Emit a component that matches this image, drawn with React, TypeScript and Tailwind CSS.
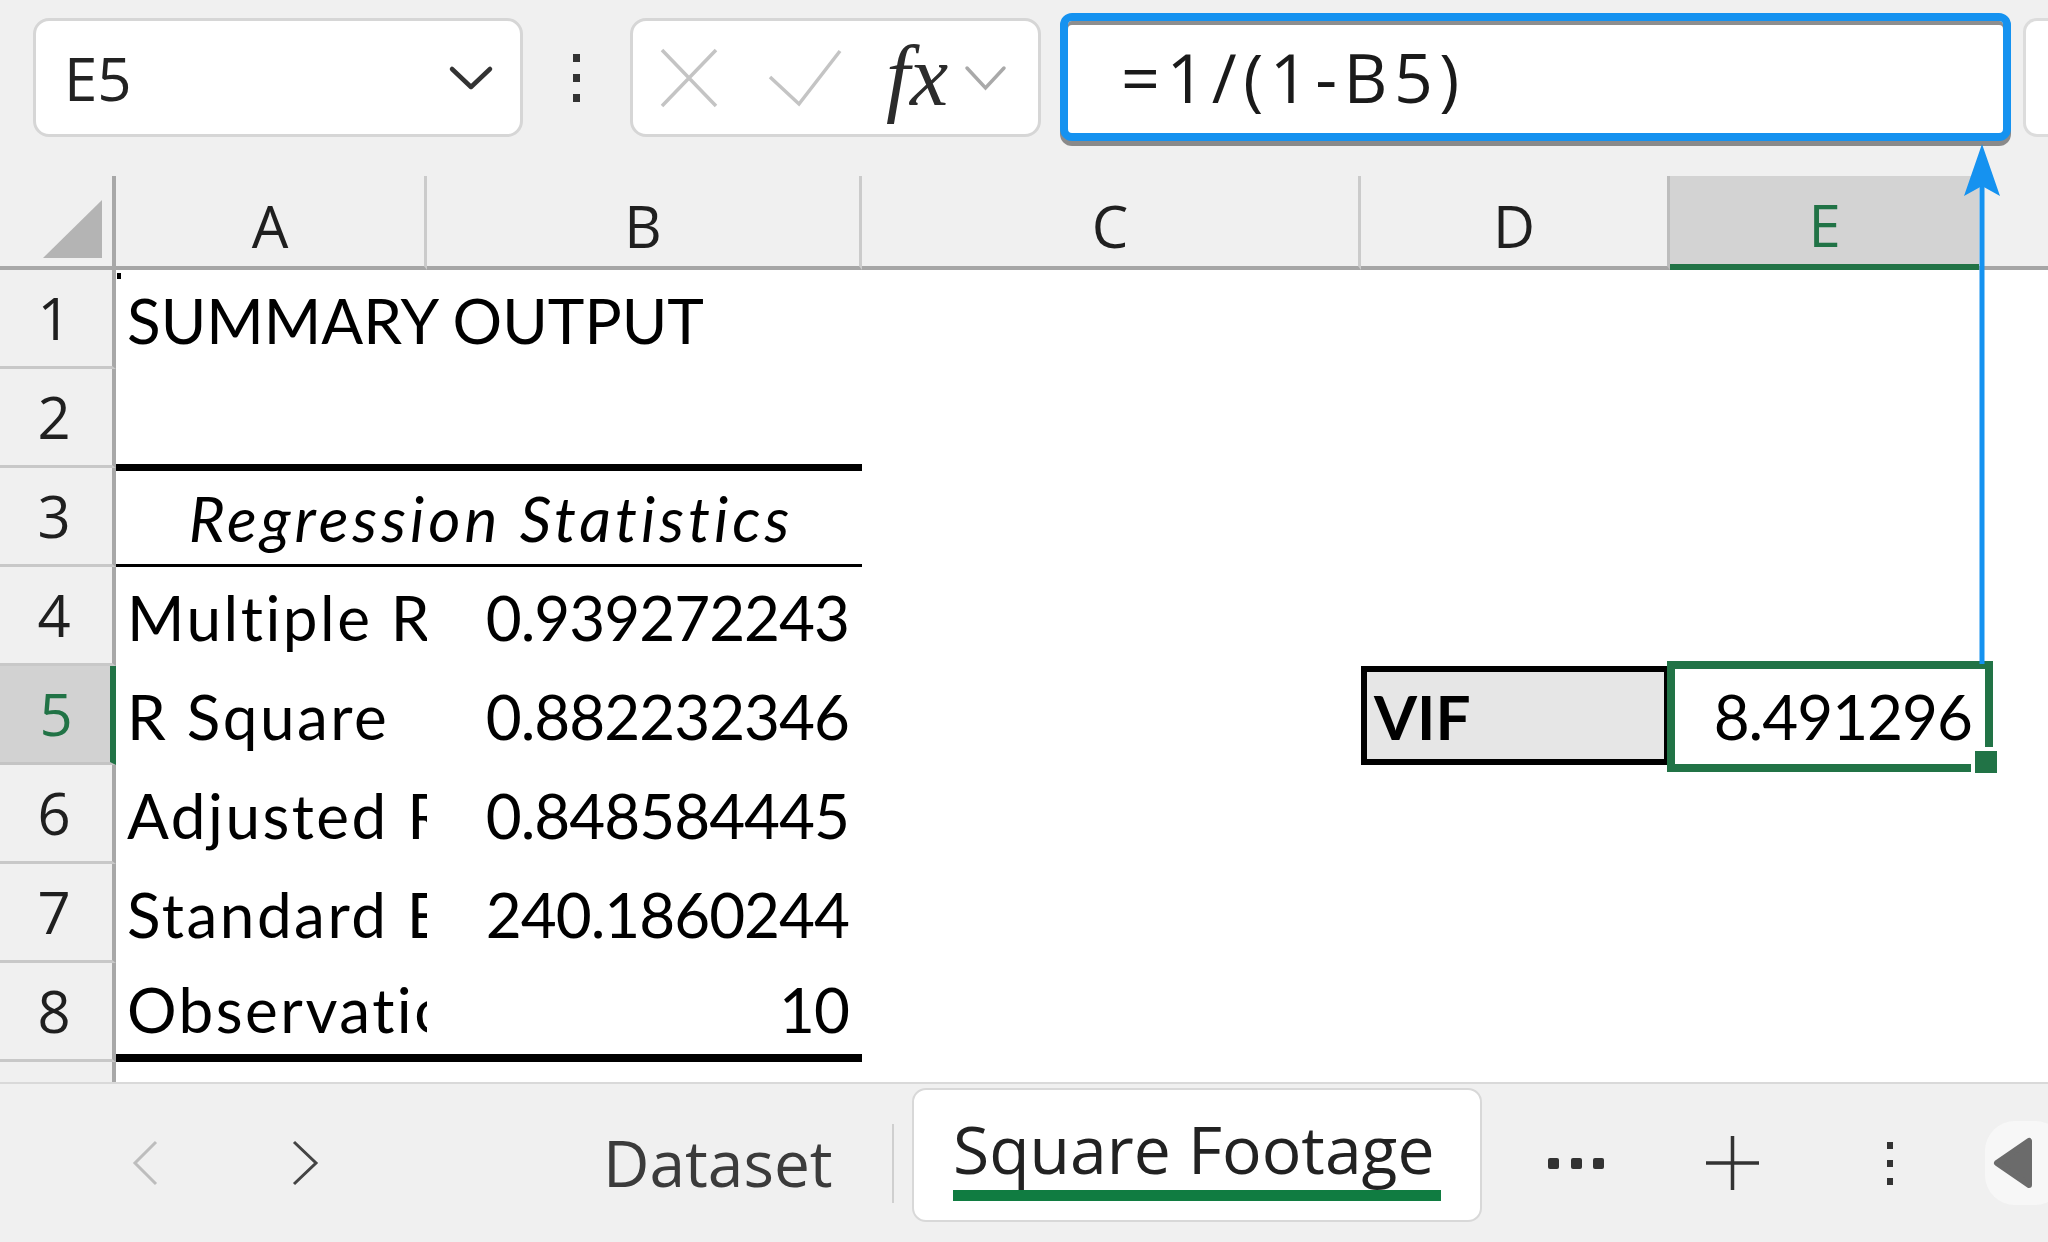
import React from "react";

function RowHead({ n, sel }: { n: string; sel?: boolean }) {
  if (sel) {
    return (
      <div className="flex h-full w-[116px] shrink-0 items-center justify-center border-b-[3px] border-r-[6px] border-b-[#c4c4c4] border-r-[#217346] bg-[#d2d2d2] pl-[2px] text-[58px] leading-none text-[#217346]">
        {n}
      </div>
    );
  }
  return (
    <div className="flex h-full w-[116px] shrink-0 items-center justify-center border-b-[3px] border-r-[4px] border-b-[#c8c8c8] border-r-[#a8a8a8] bg-[#f0f0f0] pr-[4px] text-[58px] leading-none text-[#1f1f1f]">
      {n}
    </div>
  );
}

function LabelCell({ text }: { text: string }) {
  return (
    <div className="flex h-full w-[311px] shrink-0 items-center overflow-hidden whitespace-nowrap pl-[11px] font-[Lato,sans-serif] text-[62px] leading-none tracking-[2.5px] text-black">
      {text}
    </div>
  );
}

function ValueCell({ text, last }: { text: string; last?: boolean }) {
  if (last) {
    return (
      <div className="flex h-full w-[435px] shrink-0 items-center justify-end border-b-[8px] border-black pr-[13px] font-[Lato,sans-serif] text-[62px] leading-none tracking-[-1px] text-black">
        {text}
      </div>
    );
  }
  return (
    <div className="flex h-full w-[435px] shrink-0 items-center justify-end pr-[13px] font-[Lato,sans-serif] text-[62px] leading-none tracking-[-1px] text-black">
      {text}
    </div>
  );
}

export default function App() {
  return (
    <div className="relative h-[1242px] w-[2048px] overflow-hidden bg-[#f0f0f0] font-['Open_Sans',sans-serif] text-[#1f1f1f]">
      {/* Toolbar */}
      <div className="flex h-[176px] items-start">
        <div className="ml-[33px] mt-[18px] flex h-[119px] w-[490px] shrink-0 items-center justify-between rounded-[16px] border-[3px] border-[#d6d6d6] bg-white pl-[28px] pr-[26px]">
          <span className="text-[60px] leading-none text-[#222]">E5</span>
          <svg width="46" height="28" viewBox="0 0 46 28">
            <path d="M4 5 L23 23 L42 5" fill="none" stroke="#333" strokeWidth="4.5" strokeLinecap="round" strokeLinejoin="round" />
          </svg>
        </div>
        <div className="mt-[18px] flex h-[119px] w-[107px] shrink-0 flex-col items-center justify-center gap-[12px]">
          <span className="block h-[8px] w-[7px] bg-[#333]" />
          <span className="block h-[8px] w-[7px] bg-[#333]" />
          <span className="block h-[8px] w-[7px] bg-[#333]" />
        </div>
        <div className="mt-[18px] flex h-[119px] w-[411px] shrink-0 items-center rounded-[16px] border-[3px] border-[#d6d6d6] bg-white pl-[27px]">
          <svg width="58" height="60" viewBox="0 0 58 60">
            <path d="M2 2 L56 58 M56 2 L2 58" stroke="#c4c4c4" strokeWidth="3.5" fill="none" />
          </svg>
          <svg className="ml-[50px]" width="74" height="58" viewBox="0 0 74 58">
            <path d="M2 28 L31 55 L72 2" stroke="#c4c4c4" strokeWidth="3.5" fill="none" />
          </svg>
          <span className="ml-[44px] mt-[-4px] font-['Liberation_Serif',serif] text-[86px] italic leading-none text-[#2b2b2b]">fx</span>
          <svg className="ml-[16px]" width="43" height="28" viewBox="0 0 43 28">
            <path d="M3 4 L21.5 24 L40 4" stroke="#a9a9a9" strokeWidth="3.5" fill="none" strokeLinecap="round" />
          </svg>
        </div>
        <div className="ml-[19px] mt-[13px] flex h-[128px] w-[951px] shrink-0 items-center rounded-[12px] border-[8px] border-[#1592f0] bg-white pl-[53px] shadow-[inset_0_4px_0_#8e8e8e,0_5px_0_#8a8a8a]">
          <span className="text-[68px] leading-none tracking-[6.5px] text-[#1a1a1a]">=1/(1-B5)</span>
        </div>
        <div className="ml-[12px] mt-[18px] h-[119px] w-[60px] shrink-0 rounded-l-[14px] border-[3px] border-r-0 border-[#dcdcdc] bg-white" />
      </div>

      {/* Grid */}
      <div className="relative flex h-[906px] flex-col bg-white">
        {/* Column header */}
        <div className="flex h-[94px] shrink-0 bg-[#f0f0f0]">
          <div className="flex h-full w-[116px] shrink-0 items-end justify-end border-b-[4px] border-r-[4px] border-[#a8a8a8] pb-[8px] pr-[10px]">
            <svg width="59" height="58" viewBox="0 0 59 58">
              <path d="M59 0 L59 58 L0 58 Z" fill="#b4b4b4" />
            </svg>
          </div>
          <div className="flex h-full w-[311px] shrink-0 items-center justify-center border-b-[4px] border-r-[3px] border-b-[#a6a6a6] border-r-[#cbcbcb] pt-[10px] text-[58px] leading-none text-[#1f1f1f]">A</div>
          <div className="flex h-full w-[435px] shrink-0 items-center justify-center border-b-[4px] border-r-[3px] border-b-[#a6a6a6] border-r-[#cbcbcb] pt-[10px] text-[58px] leading-none text-[#1f1f1f]">B</div>
          <div className="flex h-full w-[499px] shrink-0 items-center justify-center border-b-[4px] border-r-[3px] border-b-[#a6a6a6] border-r-[#cbcbcb] pt-[10px] text-[58px] leading-none text-[#1f1f1f]">C</div>
          <div className="flex h-full w-[309px] shrink-0 items-center justify-center border-b-[4px] border-r-[3px] border-b-[#a6a6a6] border-r-[#bdbdbd] pt-[10px] text-[58px] leading-none text-[#1f1f1f]">D</div>
          <div className="flex h-full w-[309px] shrink-0 items-center justify-center border-b-[6px] border-b-[#217346] bg-[#d3d3d3] pt-[10px] text-[58px] leading-none text-[#217346]">E</div>
          <div className="h-full flex-1 border-b-[4px] border-b-[#a6a6a6]" />
        </div>

        {/* Row 1 */}
        <div className="flex h-[99px] shrink-0">
          <RowHead n="1" />
          <div className="relative z-10 flex h-full w-[311px] shrink-0 items-center overflow-visible whitespace-nowrap pl-[11px] font-[Lato,sans-serif] text-[62px] leading-none text-black">
            <span className="absolute left-[1px] top-[3px] h-[6px] w-[4px] bg-black" />
            SUMMARY OUTPUT
          </div>
        </div>
        {/* Row 2 */}
        <div className="flex h-[99px] shrink-0">
          <RowHead n="2" />
          <div className="h-full w-[746px] shrink-0 border-b-[4px] border-black" />
        </div>
        {/* Row 3 */}
        <div className="flex h-[99px] shrink-0">
          <RowHead n="3" />
          <div className="flex h-full w-[746px] shrink-0 items-center justify-center border-b-[3px] border-t-[3px] border-black pl-[4px] font-[Lato,sans-serif] text-[62px] italic leading-none tracking-[4px] text-black">
            Regression Statistics
          </div>
        </div>
        {/* Row 4 */}
        <div className="flex h-[99px] shrink-0">
          <RowHead n="4" />
          <LabelCell text="Multiple R" />
          <ValueCell text="0.939272243" />
        </div>
        {/* Row 5 */}
        <div className="flex h-[99px] shrink-0">
          <RowHead n="5" sel />
          <LabelCell text="R Square" />
          <ValueCell text="0.882232346" />
          <div className="h-full w-[499px] shrink-0" />
          <div className="flex h-full w-[309px] shrink-0 items-center border-[6px] border-black bg-[#e6e6e6] pl-[7px] font-[Lato,sans-serif] text-[62px] font-bold leading-none text-black">
            VIF
          </div>
          <div className="flex h-full w-[309px] shrink-0 items-center justify-end pr-[7px] font-[Lato,sans-serif] text-[62px] leading-none tracking-[-1px] text-black">
            8.491296
          </div>
        </div>
        {/* Row 6 */}
        <div className="flex h-[99px] shrink-0">
          <RowHead n="6" />
          <LabelCell text="Adjusted R Square" />
          <ValueCell text="0.848584445" />
        </div>
        {/* Row 7 */}
        <div className="flex h-[99px] shrink-0">
          <RowHead n="7" />
          <LabelCell text="Standard Error" />
          <ValueCell text="240.1860244" />
        </div>
        {/* Row 8 */}
        <div className="flex h-[99px] shrink-0">
          <RowHead n="8" />
          <div className="flex h-full w-[311px] shrink-0 items-center overflow-hidden whitespace-nowrap border-b-[8px] border-black pl-[11px] font-[Lato,sans-serif] text-[62px] leading-none tracking-[2.5px] text-black">
            Observations
          </div>
          <ValueCell text="10" last />
        </div>
        {/* Row 9 partial */}
        <div className="flex flex-1">
          <div className="h-full w-[116px] shrink-0 border-r-[4px] border-r-[#a8a8a8] bg-[#f0f0f0]" />
        </div>

        {/* Selection overlay on E5 */}
        <div className="absolute left-[1667px] top-[485px] h-[111px] w-[326px] border-[8px] border-[#217346]" />
        <div className="absolute left-[1971px] top-[571px] h-[30px] w-[30px] border-[4px] border-white bg-[#217346]" />
      </div>

      {/* Sheet tab bar */}
      <div className="flex h-[160px] items-center border-t-[2px] border-[#d9d9d9] bg-[#f0f0f0]">
        <svg className="ml-[131px] shrink-0" width="28" height="46" viewBox="0 0 28 46">
          <path d="M25 2 L4 23 L25 44" stroke="#bdbdbd" strokeWidth="3" fill="none" />
        </svg>
        <svg className="ml-[131px] shrink-0" width="30" height="46" viewBox="0 0 30 46">
          <path d="M4 2 L26 23 L4 44" stroke="#444" strokeWidth="3" fill="none" />
        </svg>
        <div className="ml-[283px] w-[289px] shrink-0 text-[64px] leading-none text-[#3b3b3b]">Dataset</div>
        <div className="h-[79px] w-[2px] shrink-0 bg-[#cfcfcf]" />
        <div className="ml-[18px] mt-[4px] flex h-[134px] w-[570px] shrink-0 flex-col self-start rounded-[14px] border-[2px] border-[#d8d8d8] bg-white pl-[39px] pt-[25px]">
          <span className="whitespace-nowrap text-[66px] leading-none text-[#222]">Square Footage</span>
          <span className="mt-[9px] block h-[11px] w-[488px] bg-[#107c41]" />
        </div>
        <div className="ml-[66px] flex w-[56px] shrink-0 items-center justify-between">
          <span className="block h-[11px] w-[11px] rounded-[2px] bg-[#333]" />
          <span className="block h-[11px] w-[11px] rounded-[2px] bg-[#333]" />
          <span className="block h-[11px] w-[11px] rounded-[2px] bg-[#333]" />
        </div>
        <svg className="ml-[102px] shrink-0" width="53" height="54" viewBox="0 0 53 54">
          <path d="M26.5 0 L26.5 54 M0 27 L53 27" stroke="#333" strokeWidth="3.5" fill="none" />
        </svg>
        <div className="ml-[128px] flex h-[43px] w-[7px] shrink-0 flex-col justify-between">
          <span className="block h-[7px] w-[6px] bg-[#333]" />
          <span className="block h-[7px] w-[6px] bg-[#333]" />
          <span className="block h-[7px] w-[6px] bg-[#333]" />
        </div>
        <svg className="ml-[91px] shrink-0" width="63" height="84" viewBox="0 0 63 84">
          <rect x="0" y="0" width="80" height="84" rx="30" fill="#f7f7f7" />
          <path d="M12 42 L44 20 L44 64 Z" fill="#6b6b6b" stroke="#6b6b6b" strokeWidth="6" strokeLinejoin="round" />
        </svg>
      </div>

      {/* Blue arrow */}
      <svg className="pointer-events-none absolute left-[1959px] top-[140px]" width="46" height="524" viewBox="0 0 46 524">
        <path d="M23 40 L23 524" stroke="#1592f0" strokeWidth="5" fill="none" />
        <path d="M23 4 L41 56 L23 46 L5 56 Z" fill="#1592f0" />
      </svg>
    </div>
  );
}
